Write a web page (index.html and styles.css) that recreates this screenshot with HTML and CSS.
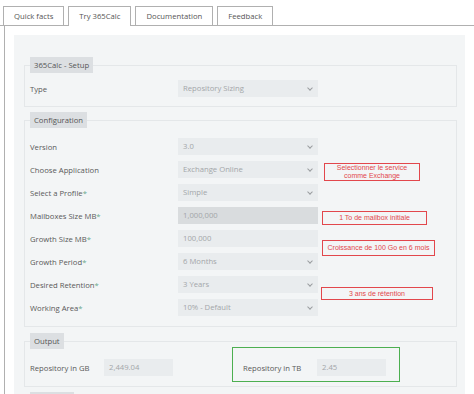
FILE: index.html
```html
<!DOCTYPE html>
<html lang="en">

<head>
  <meta charset="UTF-8" />
  <title>365Calc</title>
  <link rel="stylesheet" href="styles.css">
</head>

<body>

  <div class="page">
    <!-- tabs -->
    <div class="tabs">
      <div class="tab">Quick facts</div>
      <div class="tab active">Try 365Calc</div>
      <div class="tab">Documentation</div>
      <div class="tab">Feedback</div>
    </div>

    <div class="tab-body">
      <div class="panel">

        <fieldset class="group setup">
          <legend>365Calc - Setup</legend>
          <div class="row">
            <label>Type</label>
            <div class="field select">Repository Sizing</div>
          </div>
        </fieldset>

        <fieldset class="group config">
          <legend>Configuration</legend>
          <div class="row">
            <label>Version</label>
            <div class="field select">3.0</div>
          </div>
          <div class="row">
            <label>Choose Application</label>
            <div class="field select">Exchange Online</div>
          </div>
          <div class="row">
            <label>Select a Profile<span class="req">*</span></label>
            <div class="field select">Simple</div>
          </div>
          <div class="row">
            <label>Mailboxes Size MB<span class="req">*</span></label>
            <div class="field dark">1,000,000</div>
          </div>
          <div class="row">
            <label>Growth Size MB<span class="req">*</span></label>
            <div class="field">100,000</div>
          </div>
          <div class="row">
            <label>Growth Period<span class="req">*</span></label>
            <div class="field select">6 Months</div>
          </div>
          <div class="row">
            <label>Desired Retention<span class="req">*</span></label>
            <div class="field select">3 Years</div>
          </div>
          <div class="row">
            <label>Working Area<span class="req">*</span></label>
            <div class="field select">10% - Default</div>
          </div>
        </fieldset>

        <fieldset class="group output">
          <legend>Output</legend>
          <div class="row">
            <label class="out-label">Repository in GB</label>
            <div class="field out">2,449.04</div>
            <label class="out-label tb">Repository in TB</label>
            <div class="field out">2.45</div>
          </div>
        </fieldset>

        <fieldset class="group more">
          <legend>&nbsp;</legend>
        </fieldset>

      </div>
    </div>

    <!-- notes drawn over the screenshot -->
    <div class="note n1">Selectionner le service<br>comme Exchange</div>
    <div class="note n2">1 To de mailbox initiale</div>
    <div class="note n3">Croissance de 100 Go en 6 mois</div>
    <div class="note n4">3 ans de rétention</div>
    <div class="highlight"></div>
  </div>

</body>

</html>
```

FILE: styles.css
```css
html {
  overflow: hidden;
}

body {
  margin: 0;
  background: #fff;
  font-family: "Open Sans", sans-serif;
  font-size: 7.7px;
  color: #595959;
}

.page {
  position: relative;
  height: 394px;
  overflow: hidden;
}

/* tabs */
.tabs {
  display: flex;
  gap: 4px;
  margin-top: 6px;
  padding-left: 3px;
  border-bottom: 1px solid #b0b0b0;
  height: 19px;
}

.tab {
  border: 1px solid #b0b0b0;
  border-bottom: none;
  padding: 0 10px;
  line-height: 18px;
  background: #fff;
  color: #555;
}

.tab.active {
  height: 19px;
  margin-bottom: -1px;
}

.tab-body {
  margin-left: 4px;
  border-left: 1px solid #b0b0b0;
  padding: 9px 9px 0 9px;
}

.panel {
  background: #f3f5f6;
  padding: 22px 8px 0 10px;
  height: 400px;
}

/* groups */
.group {
  margin: 0 0 5px 0;
  padding: 0 5px 9px 5px;
  border: 1px solid #e4e7e9;
  min-inline-size: 0;
}

.group legend {
  background: #dcdfe2;
  padding: 0 4px;
  line-height: 16px;
  color: #555;
}

.row {
  display: flex;
  align-items: center;
  height: 17px;
  margin-top: 6px;
}

.setup .row {
  margin-top: 7px;
}

.config {
  margin-bottom: 6px;
  padding-bottom: 10px;
}

.config .row:first-of-type {
  margin-top: 10px;
}

.row label {
  width: 148px;
  flex: none;
}

.req {
  color: #6aa88a;
}

.field {
  width: 140px;
  height: 17px;
  line-height: 17px;
  box-sizing: border-box;
  padding-left: 5px;
  background: #e9ecee;
  color: #a3a6a9;
  position: relative;
}

.field.dark {
  background: #d9dcde;
}

.field.select::after {
  content: "";
  position: absolute;
  right: 6px;
  top: 6px;
  width: 3px;
  height: 3px;
  border-right: 1px solid #9a9da0;
  border-bottom: 1px solid #9a9da0;
  transform: rotate(45deg);
}

.output {
  padding-bottom: 10px;
}

.output .row {
  margin-top: 10px;
}

.row .out-label {
  width: 74px;
}

.row .out-label.tb {
  margin-left: 70px;
}

.field.out {
  width: 69px;
}

.more legend {
  width: 36px;
}

/* overlays */
.note {
  position: absolute;
  border: 1px solid #e2474c;
  color: #e2474c;
  font-family: "Liberation Sans", Arial, sans-serif;
  font-size: 7px;
  line-height: 8px;
  text-align: center;
  box-sizing: border-box;
  display: flex;
  align-items: center;
  justify-content: center;
}

.n1 {
  left: 324px;
  top: 163px;
  width: 96px;
  height: 18px;
}

.n2 {
  left: 322px;
  top: 211px;
  width: 105px;
  height: 14px;
}

.n3 {
  left: 322px;
  top: 240px;
  width: 113px;
  height: 16px;
}

.n4 {
  left: 321px;
  top: 287px;
  width: 112px;
  height: 13px;
}

.highlight {
  position: absolute;
  left: 232px;
  top: 347px;
  width: 168px;
  height: 35px;
  box-sizing: border-box;
  border: 1.5px solid #4caf50;
}
```
